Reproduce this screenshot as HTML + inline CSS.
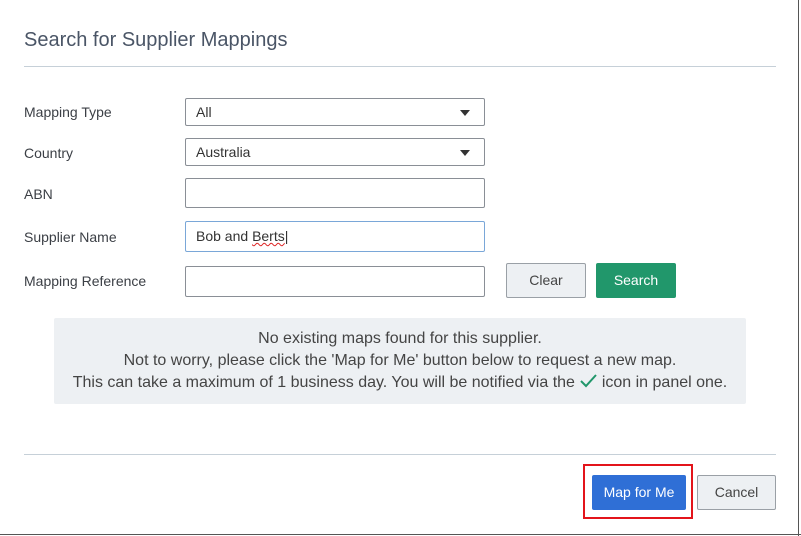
<!DOCTYPE html>
<html><head><style>
body{margin:0;width:801px;height:536px;background:#fff;font-family:"Liberation Sans",sans-serif;position:relative;overflow:hidden}
.a{position:absolute}
.lbl{left:24px;font-size:14px;color:#3b3f45}
.in{left:185px;width:300px;border:1px solid #8a8f96;border-radius:2px;background:#fff;font-size:14px;color:#333;box-sizing:border-box;padding-left:10px}
.car{position:absolute;right:14px;top:11px;width:0;height:0;border-left:5px solid transparent;border-right:5px solid transparent;border-top:6px solid #333}
.btn{font-size:14px;text-align:center;box-sizing:border-box;border-radius:2px}
</style></head><body>
<div class="a" style="right:2px;top:0;width:1px;height:536px;background:#555"></div>
<div class="a" style="left:0;bottom:1px;width:801px;height:1px;background:#555"></div>
<div class="a" style="left:24px;top:29px;font-size:20px;color:#4a5566">Search for Supplier Mappings</div>
<div class="a" style="left:24px;top:66px;width:752px;height:1px;background:#c6d0d8"></div>

<div class="a lbl" style="top:104px">Mapping Type</div>
<div class="a in" style="top:98px;height:28px;line-height:26px">All<span class="car"></span></div>
<div class="a lbl" style="top:145px">Country</div>
<div class="a in" style="top:138px;height:28px;line-height:26px">Australia<span class="car"></span></div>
<div class="a lbl" style="top:186px">ABN</div>
<div class="a in" style="top:178px;height:30px"></div>
<div class="a lbl" style="top:229px">Supplier Name</div>
<div class="a in" style="top:221px;height:31px;line-height:29px;border-color:#7aa7d8">Bob and <span style="text-decoration:underline wavy #d22;text-decoration-thickness:1px">Berts</span>|</div>
<div class="a lbl" style="top:273px">Mapping Reference</div>
<div class="a in" style="top:266px;height:31px"></div>
<div class="a btn" style="left:506px;top:263px;width:80px;height:35px;line-height:33px;background:#edf0f3;border:1px solid #9aa0a6;color:#444">Clear</div>
<div class="a btn" style="left:596px;top:263px;width:80px;height:35px;line-height:35px;background:#21976b;color:#fff">Search</div>

<div class="a" style="left:54px;top:318px;width:692px;height:86px;background:#edf0f3;border-radius:2px;text-align:center;font-size:16px;color:#444;line-height:22px;padding-top:10px;box-sizing:border-box">
No existing maps found for this supplier.<br>Not to worry, please click the 'Map for Me' button below to request a new map.<br>This can take a maximum of 1 business day. You will be notified via the <svg width="18" height="14" viewBox="0 0 18 14" style="vertical-align:-1px"><path d="M2 7l5 5L17 1" fill="none" stroke="#21976b" stroke-width="2"/></svg> icon in panel one.</div>

<div class="a" style="left:24px;top:454px;width:752px;height:1px;background:#c6d0d8"></div>
<div class="a" style="left:583px;top:464px;width:110px;height:55px;border:2px solid #e3141b;box-sizing:border-box"></div>
<div class="a btn" style="left:592px;top:475px;width:94px;height:35px;line-height:35px;background:#2f6fd6;color:#fff">Map for Me</div>
<div class="a btn" style="left:697px;top:475px;width:79px;height:35px;line-height:33px;background:#edf0f3;border:1px solid #9aa0a6;color:#444">Cancel</div>
</body></html>
